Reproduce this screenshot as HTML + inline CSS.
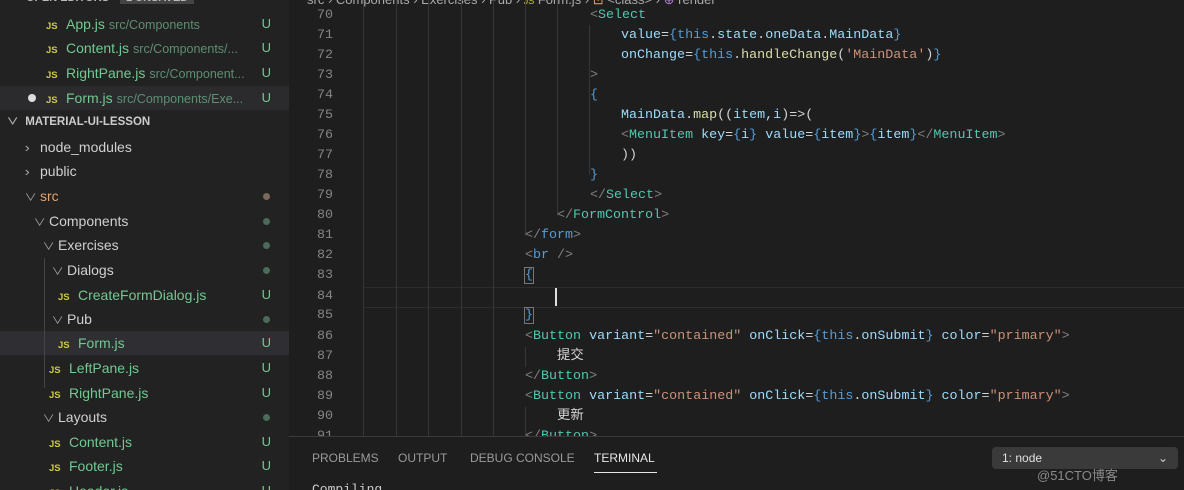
<!DOCTYPE html>
<html><head><meta charset="utf-8"><style>
*{margin:0;padding:0;box-sizing:border-box}
html,body{width:1184px;height:490px;overflow:hidden}
body{background:#1e1e1e;position:relative;font-family:"Liberation Sans","Noto Sans CJK SC",sans-serif}
#side{position:absolute;left:0;top:0;width:289px;height:490px;background:#222222;overflow:hidden}
#side .r{position:absolute;left:0;width:289px;height:24px;font-size:14px;line-height:24px;color:#d0d0d0;white-space:nowrap}
.g{color:#73c991}
.p{color:#5d8f72;font-size:12.5px;margin-left:4px}
.js{color:#cbcb41;font-size:9.5px;font-weight:bold;display:inline-block;width:20px}
.u{position:absolute;right:18px;color:#73c991;font-size:13px}
.dot{position:absolute;right:19px;top:9px;width:7px;height:7px;border-radius:50%;background:#4b6b58}
.ch{display:inline-block;width:14px;color:#aaa;font-size:10px;transform:scaleX(1.2)}
#ed{position:absolute;left:289px;top:0;width:895px;height:436px;background:#1e1e1e;font-family:"Liberation Mono","Noto Sans CJK SC",monospace;font-size:13.35px;overflow:hidden}
.ln{position:absolute;left:0;width:44px;text-align:right;color:#858585;height:20px;line-height:20px}
.cd{position:absolute;height:20px;line-height:20px;white-space:pre;color:#d4d4d4}
.gd{position:absolute;top:0;width:1px;background:#363636}
.t{color:#4ec9b0}.b{color:#808080}.a{color:#9cdcfe}.s{color:#ce9178}.k{color:#569cd6}.f{color:#dcdcaa}
#panel{position:absolute;left:289px;top:436px;width:895px;height:54px;background:#1e1e1e;border-top:1px solid #3a3a3a;overflow:hidden}
.tab{position:absolute;top:14px;font-size:12px;color:#9a9a9a}
</style></head><body>
<div id="side">
<div class="r" style="top:-11px;height:18px;font-size:11px;font-weight:bold;color:#bbb;line-height:18px;padding-left:26px">OPEN EDITORS <span style="background:#444;padding:0 6px;margin-left:8px">1 UNSAVED</span></div>
<div class="r" style="top:12px;padding-left:46px"><span class="js">JS</span><span class="g">App.js</span><span class="p">src/Components</span><span class="u">U</span></div>
<div class="r" style="top:36px;padding-left:46px"><span class="js">JS</span><span class="g">Content.js</span><span class="p">src/Components/...</span><span class="u">U</span></div>
<div class="r" style="top:61px;padding-left:46px"><span class="js">JS</span><span class="g">RightPane.js</span><span class="p">src/Component...</span><span class="u">U</span></div>
<div class="r" style="top:86px;padding-left:28px;background:#2b2b2e"><span style="display:inline-block;width:8px;height:8px;border-radius:50%;background:#ddd;margin-right:10px;vertical-align:1px"></span><span class="js">JS</span><span class="g">Form.js</span><span class="p">src/Components/Exe...</span><span class="u">U</span></div>
<div class="r" style="top:110px;padding-left:8px;font-size:11.5px;font-weight:bold;color:#ccc"><span class="ch">∨</span> MATERIAL-UI-LESSON</div>
<div class="r" style="top:135px;padding-left:26px"><span class="ch" style="font-size:13px">›</span>node_modules</div>
<div class="r" style="top:159px;padding-left:26px"><span class="ch" style="font-size:13px">›</span>public</div>
<div class="r" style="top:184px;padding-left:26px;color:#e2a36f"><span class="ch">∨</span>src<span class="dot" style="background:#7a6a5a"></span></div>
<div class="r g" style="top:209px;padding-left:35px"><span class="ch">∨</span>Components<span class="dot"></span></div>
<div class="r g" style="top:233px;padding-left:44px"><span class="ch">∨</span>Exercises<span class="dot"></span></div>
<div class="r g" style="top:258px;padding-left:53px"><span class="ch">∨</span>Dialogs<span class="dot"></span></div>
<div class="r" style="top:283px;padding-left:58px"><span class="js">JS</span><span class="g">CreateFormDialog.js</span><span class="u">U</span></div>
<div class="r g" style="top:307px;padding-left:53px"><span class="ch">∨</span>Pub<span class="dot"></span></div>
<div class="r" style="top:331px;padding-left:58px;background:#2e2e33"><span class="js">JS</span><span class="g">Form.js</span><span class="u">U</span></div>
<div class="r" style="top:356px;padding-left:49px"><span class="js">JS</span><span class="g">LeftPane.js</span><span class="u">U</span></div>
<div class="r" style="top:381px;padding-left:49px"><span class="js">JS</span><span class="g">RightPane.js</span><span class="u">U</span></div>
<div class="r g" style="top:405px;padding-left:44px"><span class="ch">∨</span>Layouts<span class="dot"></span></div>
<div class="r" style="top:430px;padding-left:49px"><span class="js">JS</span><span class="g">Content.js</span><span class="u">U</span></div>
<div class="r" style="top:454px;padding-left:49px"><span class="js">JS</span><span class="g">Footer.js</span><span class="u">U</span></div>
<div class="r" style="top:479px;padding-left:49px"><span class="js">JS</span><span class="g">Header.js</span><span class="u">U</span></div>
<div style="position:absolute;left:44px;top:258px;width:1px;height:130px;background:#444"></div>
</div>
<div id="ed">
<div style="position:absolute;left:0;top:-8px;height:16px;font-family:'Liberation Sans',sans-serif;font-size:13px;color:#aaa;padding-left:18px;white-space:pre">src › Components › Exercises › Pub › <span style="color:#cbcb41;font-size:9px">JS</span> Form.js › <span style="color:#e2a36f">⊡</span> &lt;class&gt; › <span style="color:#b180d7">⊕</span> render</div>
<div style="position:absolute;left:75px;top:287px;width:820px;height:21px;border-top:1px solid #2c2c2c;border-bottom:1px solid #2c2c2c"></div>
<div class="gd" style="left:74px;height:436px"></div><div class="gd" style="left:107px;height:436px"></div><div class="gd" style="left:139px;height:436px"></div><div class="gd" style="left:172px;height:436px"></div><div class="gd" style="left:204px;height:436px"></div>
<div class="gd" style="left:236px;height:236px"></div><div class="gd" style="left:268px;height:216px"></div><div class="gd" style="left:300px;top:25px;height:150px"></div>
<div class="gd" style="left:236px;top:347px;height:20px"></div><div class="gd" style="left:236px;top:407px;height:29px"></div>
<div class="ln" style="top:6px">70</div><div class="cd" style="left:301px;top:6px"><span class="b">&lt;</span><span class="t">Select</span></div>
<div class="ln" style="top:26px">71</div><div class="cd" style="left:332px;top:26px"><span class="a">value</span>=<span class="k">{this</span>.<span class="a">state</span>.<span class="a">oneData</span>.<span class="a">MainData</span><span class="k">}</span></div>
<div class="ln" style="top:46px">72</div><div class="cd" style="left:332px;top:46px"><span class="a">onChange</span>=<span class="k">{this</span>.<span class="f">handleChange</span>(<span class="s">'MainData'</span>)<span class="k">}</span></div>
<div class="ln" style="top:66px">73</div><div class="cd" style="left:301px;top:66px"><span class="b">&gt;</span></div>
<div class="ln" style="top:86px">74</div><div class="cd" style="left:301px;top:86px"><span class="k">{</span></div>
<div class="ln" style="top:106px">75</div><div class="cd" style="left:332px;top:106px"><span class="a">MainData</span>.<span class="f">map</span>((<span class="a">item</span>,<span class="a">i</span>)=&gt;(</div>
<div class="ln" style="top:126px">76</div><div class="cd" style="left:332px;top:126px"><span class="b">&lt;</span><span class="t">MenuItem</span> <span class="a">key</span>=<span class="k">{</span><span class="a">i</span><span class="k">}</span> <span class="a">value</span>=<span class="k">{</span><span class="a">item</span><span class="k">}</span><span class="b">&gt;</span><span class="k">{</span><span class="a">item</span><span class="k">}</span><span class="b">&lt;/</span><span class="t">MenuItem</span><span class="b">&gt;</span></div>
<div class="ln" style="top:146px">77</div><div class="cd" style="left:332px;top:146px">))</div>
<div class="ln" style="top:166px">78</div><div class="cd" style="left:301px;top:166px"><span class="k">}</span></div>
<div class="ln" style="top:186px">79</div><div class="cd" style="left:301px;top:186px"><span class="b">&lt;/</span><span class="t">Select</span><span class="b">&gt;</span></div>
<div class="ln" style="top:206px">80</div><div class="cd" style="left:268px;top:206px"><span class="b">&lt;/</span><span class="t">FormControl</span><span class="b">&gt;</span></div>
<div class="ln" style="top:226px">81</div><div class="cd" style="left:236px;top:226px"><span class="b">&lt;/</span><span class="k">form</span><span class="b">&gt;</span></div>
<div class="ln" style="top:246px">82</div><div class="cd" style="left:236px;top:246px"><span class="b">&lt;</span><span class="k">br</span> <span class="b">/&gt;</span></div>
<div class="ln" style="top:266px">83</div><div class="cd" style="left:236px;top:266px"><span class="k" style="outline:1px solid #777">{</span></div>
<div class="ln" style="top:287px">84</div><div style="position:absolute;left:266px;top:288px;width:2px;height:18px;background:#ddd"></div>
<div class="ln" style="top:306px">85</div><div class="cd" style="left:236px;top:306px"><span class="k" style="outline:1px solid #777">}</span></div>
<div class="ln" style="top:327px">86</div><div class="cd" style="left:236px;top:327px"><span class="b">&lt;</span><span class="t">Button</span> <span class="a">variant</span>=<span class="s">"contained"</span> <span class="a">onClick</span>=<span class="k">{this</span>.<span class="a">onSubmit</span><span class="k">}</span> <span class="a">color</span>=<span class="s">"primary"</span><span class="b">&gt;</span></div>
<div class="ln" style="top:347px">87</div><div class="cd" style="left:268px;top:347px">提交</div>
<div class="ln" style="top:367px">88</div><div class="cd" style="left:236px;top:367px"><span class="b">&lt;/</span><span class="t">Button</span><span class="b">&gt;</span></div>
<div class="ln" style="top:387px">89</div><div class="cd" style="left:236px;top:387px"><span class="b">&lt;</span><span class="t">Button</span> <span class="a">variant</span>=<span class="s">"contained"</span> <span class="a">onClick</span>=<span class="k">{this</span>.<span class="a">onSubmit</span><span class="k">}</span> <span class="a">color</span>=<span class="s">"primary"</span><span class="b">&gt;</span></div>
<div class="ln" style="top:407px">90</div><div class="cd" style="left:268px;top:407px">更新</div>
<div class="ln" style="top:427px">91</div><div class="cd" style="left:236px;top:427px"><span class="b">&lt;/</span><span class="t">Button</span><span class="b">&gt;</span></div>
</div>
<div id="panel">
<div class="tab" style="left:23px">PROBLEMS</div>
<div class="tab" style="left:109px">OUTPUT</div>
<div class="tab" style="left:181px">DEBUG CONSOLE</div>
<div class="tab" style="left:305px;color:#e7e7e7">TERMINAL</div>
<div style="position:absolute;left:305px;top:35px;width:63px;height:1px;background:#e7e7e7"></div>
<div style="position:absolute;left:703px;top:10px;width:186px;height:22px;background:#3a3a3a;border-radius:4px;color:#e0e0e0;font-size:12px;line-height:22px;padding-left:10px">1: node<span style="position:absolute;right:10px;color:#ccc">⌄</span></div>
<div style="position:absolute;left:748px;top:28px;color:#8a8a8a;font-size:13px">@51CTO博客</div>
<div style="position:absolute;left:23px;top:45px;color:#ccc;font-family:'Liberation Mono',monospace;font-size:13px">Compiling...</div>
</div>
</body></html>
